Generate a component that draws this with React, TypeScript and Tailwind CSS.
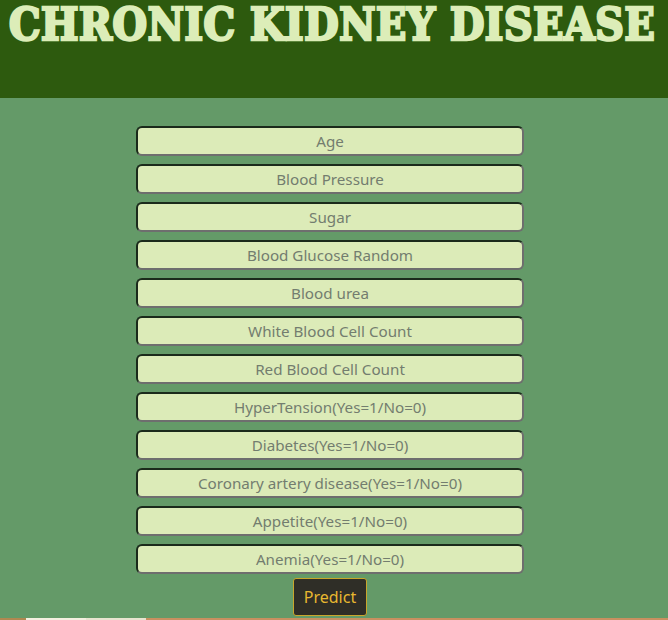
import React from 'react';

const fields = [
  'Age',
  'Blood Pressure',
  'Sugar',
  'Blood Glucose Random',
  'Blood urea',
  'White Blood Cell Count',
  'Red Blood Cell Count',
  'HyperTension(Yes=1/No=0)',
  'Diabetes(Yes=1/No=0)',
  'Coronary artery disease(Yes=1/No=0)',
  'Appetite(Yes=1/No=0)',
  'Anemia(Yes=1/No=0)',
];

export default function App() {
  return (
    <div className="w-[668px] h-[620px] overflow-hidden bg-[#649a68]">
      {/* Header */}
      <div className="h-[98px] bg-[#2d5a0e] pl-[9px] pt-[2px]">
        <h1
          className="text-[44px] leading-[46px] font-bold text-[#dcedb8] whitespace-nowrap tracking-[0.6px] [-webkit-text-stroke:2.5px_#dcedb8]"
          style={{ fontFamily: '"DejaVu Serif Condensed", "DejaVu Serif", serif' }}
        >
          CHRONIC KIDNEY DISEASE
        </h1>
      </div>

      {/* Form */}
      <form className="w-[660px] flex flex-col items-center pt-[28px] gap-[8px]">
        {fields.map((f) => (
          <input
            key={f}
            type="text"
            placeholder={f}
            className="w-[388px] h-[30px] rounded-[6px] border-2 border-t-[#1b2a1b] border-l-[#1b2a1b] border-b-[#6e6e6e] border-r-[#6e6e6e] bg-[#dcebb8] text-center text-[15.2px] text-[#737d6f] placeholder:text-[#737d6f] outline-none"
            style={{ fontFamily: '"Noto Sans", sans-serif' }}
          />
        ))}
        <button
          type="submit"
          className="mt-[-4px] w-[74px] h-[38px] rounded-[3px] border border-[#c9a62c] bg-[#2f2e27] text-[16px] text-[#e8b830]"
          style={{ fontFamily: '"Noto Sans", sans-serif' }}
        >
          Predict
        </button>
      </form>

      <div className="mt-[2px] h-[2px] flex">
        <div className="w-[26px] bg-[#b08850]" />
        <div className="w-[60px] bg-[#f4f0e0]" />
        <div className="w-[60px] bg-[#e8e4d0]" />
        <div className="flex-1 bg-[#c89060]" />
      </div>
    </div>
  );
}
